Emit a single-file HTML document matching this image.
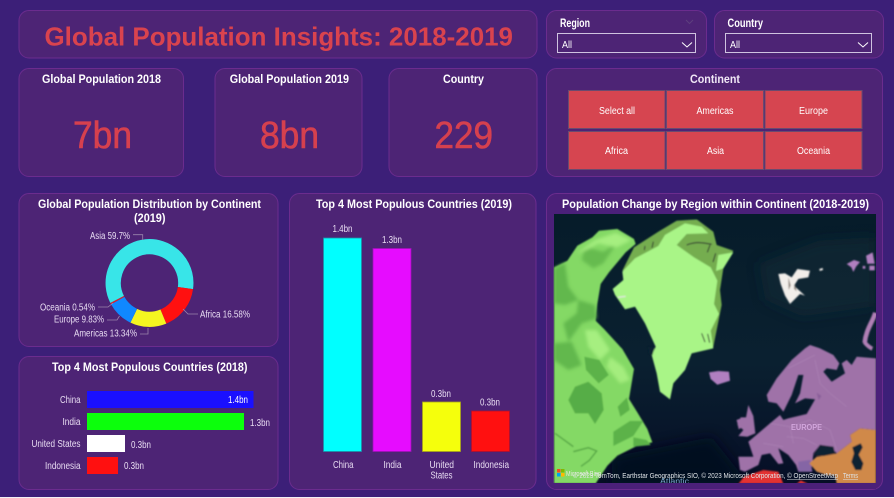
<!DOCTYPE html>
<html lang="en">
<head>
<meta charset="utf-8">
<title>Global Population Insights</title>
<style>
html,body{margin:0;padding:0;background:#3c1f78;width:894px;height:498px;overflow:hidden}
svg{display:block}
text{font-family:"Liberation Sans",sans-serif;}
.p{fill:#4d2475;stroke:#6b2c8e;stroke-width:1}
.t{fill:#fff;font-weight:bold;font-size:12px}
.l{fill:#e8dcf2;font-size:10px}
.w{fill:#fff;font-size:10px}
.k{fill:#d6404e;font-size:38px;stroke:#d6404e;stroke-width:.6}
.b{fill:#d64550;stroke:#6b4a6e;stroke-width:1}
.lead{fill:none;stroke:#9a84ab;stroke-width:.8}
</style>
</head>
<body>
<svg width="894" height="498" viewBox="0 0 894 498" xmlns="http://www.w3.org/2000/svg">
<defs>
<clipPath id="mc"><rect x="27" y="72" width="966" height="807"/></clipPath>
<filter id="bl" x="-5%" y="-5%" width="110%" height="110%"><feGaussianBlur stdDeviation="2"/></filter>
<filter id="bl3" x="-10%" y="-10%" width="120%" height="120%"><feGaussianBlur stdDeviation="5"/></filter>
<filter id="bl2" x="-20%" y="-20%" width="140%" height="140%"><feGaussianBlur stdDeviation="18"/></filter>
<linearGradient id="sea" x1="0" y1="0" x2="0" y2="1"><stop offset="0" stop-color="#061c2a"/><stop offset=".55" stop-color="#0a2030"/><stop offset="1" stop-color="#060e26"/></linearGradient>
</defs>
<rect width="894" height="498" fill="#3c1f78"/>
<rect x="0" y="497" width="894" height="1" fill="#f2f0f4"/>

<!-- Title -->
<rect class="p" x="19" y="10.5" width="518" height="47.5" rx="10"/>
<text x="44.500" y="45.500" font-size="26" font-weight="bold" fill="#d9434e" textLength="468.500" lengthAdjust="spacingAndGlyphs">Global Population Insights: 2018-2019</text>

<!-- KPI cards -->
<rect class="p" x="19" y="68.5" width="164.500" height="108" rx="10"/>
<text class="t" x="42" y="83" textLength="119" lengthAdjust="spacingAndGlyphs">Global Population 2018</text>
<text class="k" x="73" y="148" textLength="59" lengthAdjust="spacingAndGlyphs">7bn</text>
<rect class="p" x="215" y="68.5" width="147" height="108" rx="10"/>
<text class="t" x="229.700" y="83" textLength="119.300" lengthAdjust="spacingAndGlyphs">Global Population 2019</text>
<text class="k" x="260" y="148" textLength="59" lengthAdjust="spacingAndGlyphs">8bn</text>
<rect class="p" x="389" y="68.5" width="148" height="108" rx="10"/>
<text class="t" x="443" y="83" textLength="41" lengthAdjust="spacingAndGlyphs">Country</text>
<text class="k" x="434.500" y="148" textLength="58.500" lengthAdjust="spacingAndGlyphs">229</text>

<!-- Slicers -->
<rect class="p" x="546.500" y="10.5" width="160" height="47.500" rx="10"/>
<text class="t" x="560" y="27" textLength="30" lengthAdjust="spacingAndGlyphs">Region</text>
<path d="M686 20l3.500 3.500 3.500-3.500" fill="none" stroke="#5d3f7e" stroke-width="1"/>
<rect x="557.500" y="33.500" width="138" height="19" fill="#4d2475" stroke="#cfc3e0" stroke-width="1"/>
<text class="w" x="562" y="48" textLength="10" lengthAdjust="spacingAndGlyphs">All</text>
<path d="M682 42.500l5 4.500 5-4.500" fill="none" stroke="#fff" stroke-width="1"/>
<rect class="p" x="714.500" y="10.5" width="169" height="47.500" rx="10"/>
<text class="t" x="727.500" y="27" textLength="35.500" lengthAdjust="spacingAndGlyphs">Country</text>
<rect x="725.500" y="33.500" width="146" height="19" fill="#4d2475" stroke="#cfc3e0" stroke-width="1"/>
<text class="w" x="730" y="48" textLength="10" lengthAdjust="spacingAndGlyphs">All</text>
<path d="M858 42.500l5 4.500 5-4.500" fill="none" stroke="#fff" stroke-width="1"/>

<!-- Continent -->
<rect class="p" x="546.500" y="68.5" width="336" height="108" rx="10"/>
<text x="690" y="83" class="t" font-size="12.500" textLength="50" lengthAdjust="spacingAndGlyphs" style="fill:#f0e8f6">Continent</text>
<rect class="b" x="568.500" y="90.500" width="96.500" height="38"/>
<rect class="b" x="666.500" y="90.500" width="97" height="38"/>
<rect class="b" x="765" y="90.500" width="97" height="38"/>
<rect class="b" x="568.500" y="131.500" width="96.500" height="38"/>
<rect class="b" x="666.500" y="131.500" width="97" height="38"/>
<rect class="b" x="765" y="131.500" width="97" height="38"/>
<text class="w" x="599" y="114" textLength="36" lengthAdjust="spacingAndGlyphs">Select all</text>
<text class="w" x="696.500" y="114" textLength="37" lengthAdjust="spacingAndGlyphs">Americas</text>
<text class="w" x="799" y="114" textLength="29" lengthAdjust="spacingAndGlyphs">Europe</text>
<text class="w" x="605" y="154" textLength="23" lengthAdjust="spacingAndGlyphs">Africa</text>
<text class="w" x="707" y="154" textLength="17" lengthAdjust="spacingAndGlyphs">Asia</text>
<text class="w" x="797" y="154" textLength="33" lengthAdjust="spacingAndGlyphs">Oceania</text>

<!-- Donut -->
<rect class="p" x="19" y="193.500" width="259" height="153" rx="10"/>
<text class="t" x="38" y="208" textLength="223" lengthAdjust="spacingAndGlyphs">Global Population Distribution by Continent</text>
<text class="t" x="134" y="222" textLength="31.500" lengthAdjust="spacingAndGlyphs">(2019)</text>
<g transform="rotate(153 149.500 283)" fill="none" stroke-width="15.300">
<circle cx="149.500" cy="283" r="36.300" pathLength="100" stroke="#38e5e8" stroke-dasharray="59.71 40.29"/>
<circle cx="149.500" cy="283" r="36.300" pathLength="100" stroke="#ff1010" stroke-dasharray="16.58 83.42" stroke-dashoffset="-59.71"/>
<circle cx="149.500" cy="283" r="36.300" pathLength="100" stroke="#f4f520" stroke-dasharray="13.34 86.66" stroke-dashoffset="-76.29"/>
<circle cx="149.500" cy="283" r="36.300" pathLength="100" stroke="#1088ff" stroke-dasharray="9.83 90.17" stroke-dashoffset="-89.63"/>
<circle cx="149.500" cy="283" r="36.300" pathLength="100" stroke="#e0202a" stroke-dasharray="0.54 99.46" stroke-dashoffset="-99.46"/>
</g>
<path class="lead" d="M133 234.700h9.700v5.300M98 307h10l5-4M107 320h10l2.500-4M140 334h8v-6M198 314h-10l-5-5"/>
<text class="l" x="90" y="239" font-size="9.500" textLength="40" lengthAdjust="spacingAndGlyphs">Asia 59.7%</text>
<text class="l" x="40" y="310.700" font-size="9.500" textLength="55" lengthAdjust="spacingAndGlyphs">Oceania 0.54%</text>
<text class="l" x="54" y="322.700" font-size="9.500" textLength="50" lengthAdjust="spacingAndGlyphs">Europe 9.83%</text>
<text class="l" x="74" y="336.700" font-size="9.500" textLength="63" lengthAdjust="spacingAndGlyphs">Americas 13.34%</text>
<text class="l" x="200" y="317.300" font-size="9.500" textLength="50" lengthAdjust="spacingAndGlyphs">Africa 16.58%</text>

<!-- Bars 2018 -->
<rect class="p" x="19" y="356.500" width="259" height="133" rx="10"/>
<text class="t" x="52" y="371" textLength="195.500" lengthAdjust="spacingAndGlyphs">Top 4 Most Populous Countries (2018)</text>
<rect x="87" y="391" width="166.500" height="17" fill="#1a10ff"/>
<rect x="87" y="413" width="157" height="17" fill="#0cff0c"/>
<rect x="87" y="435" width="38" height="17" fill="#ffffff"/>
<rect x="87" y="457" width="31" height="17" fill="#ff1010"/>
<text class="l" x="60" y="403" font-size="9.500" textLength="20.500" lengthAdjust="spacingAndGlyphs">China</text>
<text class="l" x="62.500" y="425" font-size="9.500" textLength="18" lengthAdjust="spacingAndGlyphs">India</text>
<text class="l" x="31.500" y="447" font-size="9.500" textLength="49" lengthAdjust="spacingAndGlyphs">United States</text>
<text class="l" x="45" y="469" font-size="9.500" textLength="35.500" lengthAdjust="spacingAndGlyphs">Indonesia</text>
<text class="w" x="228" y="403" textLength="20" lengthAdjust="spacingAndGlyphs">1.4bn</text>
<text class="l" x="250" y="426" textLength="20" lengthAdjust="spacingAndGlyphs">1.3bn</text>
<text class="l" x="131" y="448" textLength="20" lengthAdjust="spacingAndGlyphs">0.3bn</text>
<text class="l" x="124" y="469" textLength="20" lengthAdjust="spacingAndGlyphs">0.3bn</text>

<!-- Bars 2019 -->
<rect class="p" x="289.500" y="193.500" width="246.500" height="296" rx="10"/>
<text class="t" x="316" y="208" textLength="196" lengthAdjust="spacingAndGlyphs">Top 4 Most Populous Countries (2019)</text>
<rect x="323.500" y="238" width="38" height="213.500" fill="#00ffff" stroke="#1d8fa8" stroke-width=".8"/>
<rect x="373" y="248.500" width="38" height="203" fill="#e60cff" stroke="#a012b8" stroke-width=".8"/>
<rect x="422.500" y="402" width="38" height="49.500" fill="#f5ff0c" stroke="#a8a41c" stroke-width=".8"/>
<rect x="471.500" y="411" width="38" height="40.500" fill="#ff1010" stroke="#b01030" stroke-width=".8"/>
<text class="l" x="332.500" y="232" textLength="20" lengthAdjust="spacingAndGlyphs">1.4bn</text>
<text class="l" x="382" y="243" textLength="20" lengthAdjust="spacingAndGlyphs">1.3bn</text>
<text class="l" x="431" y="397" textLength="20" lengthAdjust="spacingAndGlyphs">0.3bn</text>
<text class="l" x="480" y="405.700" textLength="20" lengthAdjust="spacingAndGlyphs">0.3bn</text>
<text class="l" x="333" y="468" font-size="9.500" textLength="20.500" lengthAdjust="spacingAndGlyphs">China</text>
<text class="l" x="383.500" y="468" font-size="9.500" textLength="18" lengthAdjust="spacingAndGlyphs">India</text>
<text class="l" x="429.500" y="468" font-size="9.500" textLength="24.500" lengthAdjust="spacingAndGlyphs">United</text>
<text class="l" x="430.500" y="478.700" font-size="9.500" textLength="22" lengthAdjust="spacingAndGlyphs">States</text>
<text class="l" x="473.500" y="468" font-size="9.500" textLength="35.500" lengthAdjust="spacingAndGlyphs">Indonesia</text>

<!-- Map panel -->
<rect x="546.500" y="193.500" width="336" height="296" rx="10" fill="#4b2079" stroke="#6b2c8e"/>
<text class="t" x="562" y="208" textLength="307" lengthAdjust="spacingAndGlyphs">Population Change by Region within Continent (2018-2019)</text>

<g transform="translate(545 190) scale(.33333)" clip-path="url(#mc)">
<rect x="27" y="72" width="966" height="807" fill="url(#sea)"/>
<g filter="url(#bl2)">
<path d="M640 220l180-70 170-10v210l-220 30-110-50z" fill="#12303f" opacity=".35"/>
<path d="M200 800l300-60 110 139H200z" fill="#050a20" opacity=".9"/>
</g>
<g filter="url(#bl)">
<!-- Canada -->
<path fill="#84d965" d="M67 212L97 167 142 142 162 122 217 117 267 147 272 162 242 187 192 247 167 282 157 342 152 392 177 417 232 477 267 537 252 627 277 667 307 717 322 757 277 767 217 797 187 827 152 880H27V232z"/>
<g filter="url(#bl3)">
<path fill="#62b84e" d="M27 235L60 218 70 290 100 330 60 345 27 340z"/>
<path fill="#62b84e" d="M100 330L150 345 155 385 110 400 70 455 55 400 95 370z"/>
<path fill="#62b84e" d="M80 455l30 70-40 15-43-30 0-50z"/>
<path fill="#66bb50" d="M120 170l55 15 40-25-40 60-30 15-35-25z"/>
<path fill="#a6ef80" d="M95 190L150 150 212 128 260 150 215 172 160 160 125 180z"/>
<path fill="#a6ef80" d="M120 420l35 0 40 60-30 30-35-40z"/>
<path fill="#a4ed7e" d="M195 500l40 30 20 40-30 10-40-50z"/>
</g>
<path fill="#56ad46" d="M70 630L90 590 130 575 170 610 176 660 150 702 130 670 90 670z"/>
<path fill="#5cb24a" d="M118 500l45 10 28 45-30 25-38-40z"/>
<path fill="#5cb24a" d="M205 725l50-32 40 0-30 45-60 30zM218 650l28-28 8 38-28 20zM265 742l40 8 12 15-52 5z"/>
<path fill="none" stroke="#54a544" stroke-width="4" d="M85 785l45-12 25 10-22 28-25 18M30 730l55 40"/>
<!-- Greenland -->
<path fill="#74ad50" d="M232 242L267 172 340 125 395 92 455 88 505 125 515 165 565 182 535 235 525 300 530 345 505 470 440 490 400 480 400 300z"/>
<path fill="#a9f587" d="M203 297L235 270 232 245 270 205 340 168 360 135 420 100 470 110 490 130 425 132 395 165 447 202 497 232 517 272 507 342 522 372 497 422 505 475 440 490 420 540 385 580 375 628 345 605 335 550 320 495 332 470 300 400 270 350 240 358 210 315z"/>
<path fill="#a9f587" d="M520 195l45-8-30 48-22 8z"/>
<path fill="none" stroke="#2b2a2c" stroke-width="3" d="M425 165c30-12 55-6 75-2M495 165l-8 22M325 155l-4 18M512 190l-8 26M300 168l-2 12M488 432l6 26M470 430l10 26"/>
<path fill="#0a2233" d="M310 470l18 4-6 22-10-6z"/>
<path fill="#e8e4e6" d="M218 320l24-3 0 4-24 3z"/>
<!-- Iceland -->
<path fill="#b07fc0" d="M492 547L520 543 552 545 555 572 517 584 497 567z"/>
<!-- Svalbard -->
<g transform="translate(525 72)">
<path fill="#f2eeea" d="M175 180L195 178 215 190 232 165 270 170 265 190 235 195 222 215 255 245 240 240 210 270 195 245 182 210z"/>
<path fill="#8a7f76" d="M205 190l7 24-6 14zM224 208l6 24-8-8z"/>
<path fill="#f2eeea" d="M298 165l10-3 1 6-10 3z"/>
<g fill="#b07fc0"><path d="M380 150l22-12 18 6-12 14-8 16-6-14z"/><path d="M438 125l20-10 6 34-22 0z"/><path d="M448 155l16 0 0 14-16 0zM428 156l8 0 0 8-8 0z"/></g>
<path fill="none" stroke="#b07fb5" stroke-width="14" d="M466 296c-8 28-28 50-32 90"/>
</g>
<path fill="none" stroke="#b07fb5" stroke-width="12" d="M958 456c8 10 14 16 24 20"/>
<!-- Europe etc -->
<g transform="translate(525 450)">
<path fill="#9f72a8" d="M270 15L300 25 340 45 358 70 350 90 320 85 310 95 335 125 375 100 365 70 380 60 395 75 410 50 468 55V270L420 265 390 285 395 305 350 340 330 320 300 315 280 340 278 360 272 395 235 395 228 375 205 345 175 325 190 370 175 372 150 340 125 345 115 375 75 395 60 390 55 350 100 350 85 305 150 250 180 225 190 240 205 235 260 222 285 178 255 175 225 190 240 160 250 105 235 105 215 165 190 215 170 190 145 185 140 165 170 115 215 60 255 25z"/>
<path fill="#9f72a8" d="M52 255L62 232 78 232 85 195 100 228 106 280 82 290 55 288 70 270zM50 240l20-8 6 24-20 12z"/>
<path fill="#8565a5" d="M235 365l36-5 6 35-42 0z"/>
<path fill="#8a5f9a" d="M290 158l14 10-8 12z"/>
<path fill="none" stroke="#c29bc8" stroke-width="1.200" opacity=".7" d="M205 85l40-20 40-20M285 60l15 70 30 30 50 40M150 250l60 10 60-20 60 30 20 60M200 290l50 5 40 20M130 310l60 10M210 260l10 50"/>
<path fill="#d0894a" d="M468 270L420 265 390 285 395 305 350 340 325 345 290 350 268 370 290 395 320 405 345 405 350 431H468z"/>
<path fill="#0b2031" d="M397 322l25-12 6 12-12 22 14 26-6 20-18 0-12-24 8-26z"/>
<path fill="#e33030" d="M55 431L72 410 130 390 175 395 190 431zM230 431l12-10 22 10z"/>
<path fill="#0b2031" d="M280 345l20-30 40 5 5 20-35 8z"/>
</g>
</g>
</g>

<!-- Map labels -->
<text x="791" y="430" font-size="8" font-weight="bold" fill="#d2a6dc" textLength="31" lengthAdjust="spacingAndGlyphs">EUROPE</text>
<rect x="557" y="469" width="3.500" height="3.500" fill="#f25022"/>
<rect x="561" y="469" width="3.500" height="3.500" fill="#7fba00"/>
<rect x="557" y="473" width="3.500" height="3.500" fill="#00a4ef"/>
<rect x="561" y="473" width="3.500" height="3.500" fill="#ffb900"/>
<text x="566" y="476" font-size="7" fill="#e6eadf" textLength="35" lengthAdjust="spacingAndGlyphs">Microsoft Bing</text>
<text x="573" y="478" font-size="7" fill="#dfe4e6" textLength="265" lengthAdjust="spacingAndGlyphs">© 2023 TomTom, Earthstar Geographics SIO, © 2023 Microsoft Corporation, © OpenStreetMap</text>
<text x="843" y="478" font-size="7" fill="#dfe4e6" textLength="15" lengthAdjust="spacingAndGlyphs">Terms</text>
<path d="M787 479.500h51M843 479.500h15" stroke="#dfe4e6" stroke-width=".6"/>
<text x="660" y="484" font-size="8" fill="#7aa5cc" textLength="29" lengthAdjust="spacingAndGlyphs">Atlantic</text>
<rect x="554" y="483" width="322" height="6" fill="#4b2079"/>
</svg>
</body>
</html>
